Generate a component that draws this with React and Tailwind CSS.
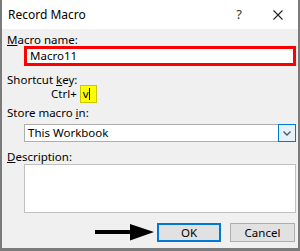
import React from "react";

function Label({ children }) {
  return <div className="h-[12px] leading-[12px] text-[11.5px] text-black">{children}</div>;
}

export default function App() {
  return (
    <div
      className="w-[300px] h-[251px] flex flex-col bg-[#f0f0f0] border-l-2 border-r-2 border-b-[3px] border-[#7b7b7b]"
      style={{ fontFamily: '"Noto Sans", "Open Sans", sans-serif' }}
    >
      {/* title bar */}
      <div className="h-[29px] bg-white flex items-center pl-[6px] pr-[15px] shrink-0">
        <span className="text-[12px] text-black flex-1">Record Macro</span>
        <span className="text-[13px] text-[#333] mr-[31px]">?</span>
        <svg width="10" height="10" viewBox="0 0 10 10">
          <path d="M0.5 0.5 L9.5 9.5 M9.5 0.5 L0.5 9.5" stroke="#222" strokeWidth="1.1" />
        </svg>
      </div>

      {/* body */}
      <div className="flex flex-col pl-[5px] pr-[2px] pt-[5px]">
        <Label>
          <span className="underline">M</span>acro name:
        </Label>
        <div className="ml-[17px] w-[272px] h-[20px] border-[3px] border-[#ff0000] bg-white flex items-center pl-[3px]">
          <span className="text-[11.5px] text-black leading-none">Macro11</span>
        </div>

        <div className="mt-[8px]">
          <Label>
            Shortcut <span className="underline">k</span>ey:
          </Label>
        </div>
        <div className="flex items-center -mt-px ml-[44px]">
          <span className="text-[11.5px] leading-none text-black">Ctrl+</span>
          <div className="ml-[3px] w-[17px] h-[18px] bg-[#ffff00] border border-[#c8c800] flex items-center pl-[2px]">
            <span className="text-[11.5px] text-black leading-none">v</span>
            <span className="w-px h-[12px] bg-black" />
          </div>
        </div>

        <div className="mt-[4px]">
          <Label>
            Store macro <span className="underline">i</span>n:
          </Label>
        </div>
        <div className="ml-[17px] mt-[5px] w-[272px] h-[18px] border border-[#aeaeae] bg-white flex items-center">
          <span className="flex-1 pl-[3px] text-[11.5px] text-black leading-none">This Workbook</span>
          <div className="w-[18px] h-[18px] -mr-px border border-[#0078d7] bg-[#e5f1fb] flex items-center justify-center">
            <svg width="8" height="5" viewBox="0 0 8 5">
              <path d="M0.5 0.5 L4 4 L7.5 0.5" fill="none" stroke="#555" strokeWidth="1.3" />
            </svg>
          </div>
        </div>

        <div className="mt-[9px]">
          <Label>
            <span className="underline">D</span>escription:
          </Label>
        </div>
        <div className="ml-[17px] mt-[1px] w-[272px] h-[49px] border border-[#c0c0c0] bg-white" />

        <div className="flex items-center mt-[10px] ml-[88px]">
          <svg width="60" height="18" viewBox="0 0 60 18">
            <rect x="0" y="6" width="36" height="4" fill="#000" />
            <path d="M35 0 L59 8 L35 16.5 Z" fill="#000" />
          </svg>
          <div className="ml-[2px] w-[64px] h-[19px] border-2 border-[#0078d7] bg-[#e1e1e1] flex items-center justify-center text-[11.5px] leading-none text-black">
            OK
          </div>
          <div className="ml-[9px] w-[65px] h-[19px] border border-[#adadad] bg-[#e1e1e1] flex items-center justify-center text-[11.5px] leading-none text-black">
            Cancel
          </div>
        </div>
      </div>
    </div>
  );
}
